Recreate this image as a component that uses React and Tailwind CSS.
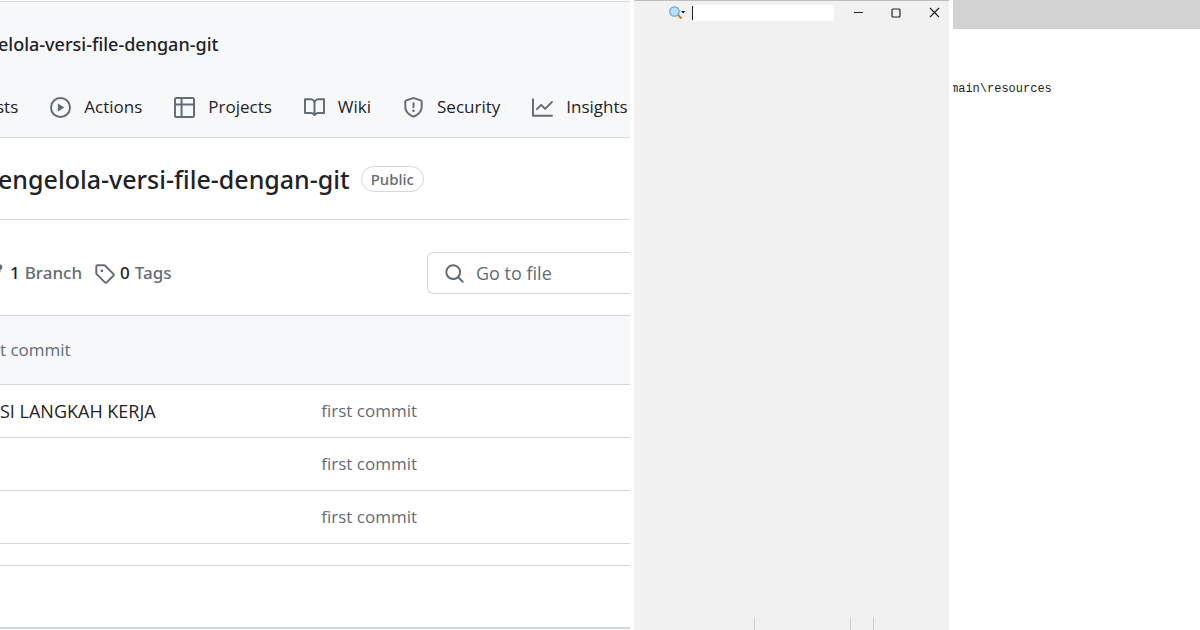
import React from 'react';

const icons = {
  play: 'M8 0a8 8 0 1 1 0 16A8 8 0 0 1 8 0ZM1.5 8a6.5 6.5 0 1 0 13 0 6.5 6.5 0 0 0-13 0Zm4.879-2.773 4.264 2.559a.25.25 0 0 1 0 .428l-4.264 2.559A.25.25 0 0 1 6 10.559V5.442a.25.25 0 0 1 .379-.215Z',
  table: 'M0 1.75C0 .784.784 0 1.75 0h12.5C15.216 0 16 .784 16 1.75v12.5A1.75 1.75 0 0 1 14.25 16H1.75A1.75 1.75 0 0 1 0 14.25ZM6.5 6.5v8h7.75a.25.25 0 0 0 .25-.25V6.5Zm8-1.5V1.75a.25.25 0 0 0-.25-.25H6.5V5Zm-13 1.5v7.75c0 .138.112.25.25.25H5v-8ZM5 5V1.5H1.75a.25.25 0 0 0-.25.25V5Z',
  book: 'M0 1.75A.75.75 0 0 1 .75 1h4.253c1.227 0 2.317.59 3 1.501A3.743 3.743 0 0 1 11.006 1h4.245a.75.75 0 0 1 .75.75v10.5a.75.75 0 0 1-.75.75h-4.507a2.25 2.25 0 0 0-1.591.659l-.622.621a.75.75 0 0 1-1.06 0l-.622-.621A2.25 2.25 0 0 0 5.258 13H.75a.75.75 0 0 1-.75-.75Zm7.251 10.324.004-5.073-.002-2.253A2.25 2.25 0 0 0 5.003 2.5H1.5v9h3.757a3.75 3.75 0 0 1 1.994.574ZM8.755 4.75l-.004 7.322a3.752 3.752 0 0 1 1.992-.572H14.5v-9h-3.495a2.25 2.25 0 0 0-2.25 2.25Z',
  shield: 'M7.467.133a1.748 1.748 0 0 1 1.066 0l5.25 1.68A1.75 1.75 0 0 1 15 3.48V7c0 1.566-.32 3.182-1.303 4.682-.983 1.498-2.585 2.813-5.032 3.855a1.697 1.697 0 0 1-1.33 0c-2.447-1.042-4.049-2.357-5.032-3.855C1.32 10.182 1 8.566 1 7V3.48a1.755 1.755 0 0 1 1.217-1.667Zm.61 1.429a.25.25 0 0 0-.153 0l-5.25 1.68a.25.25 0 0 0-.174.238V7c0 1.358.275 2.666 1.057 3.86.784 1.194 2.121 2.34 4.366 3.297a.196.196 0 0 0 .154 0c2.245-.956 3.582-2.104 4.366-3.298C13.225 9.666 13.5 8.36 13.5 7V3.48a.251.251 0 0 0-.174-.237l-5.25-1.68ZM8.75 4.75v3a.75.75 0 0 1-1.5 0v-3a.75.75 0 0 1 1.5 0ZM9 10.5a1 1 0 1 1-2 0 1 1 0 0 1 2 0Z',
  graph: 'M1.5 1.75V13.5h13.75a.75.75 0 0 1 0 1.5H.75a.75.75 0 0 1-.75-.75V1.75a.75.75 0 0 1 1.5 0Zm14.28 2.53-5.25 5.25a.75.75 0 0 1-1.06 0L7 7.06 4.28 9.78a.751.751 0 0 1-1.042-.018.751.751 0 0 1-.018-1.042l3.25-3.25a.75.75 0 0 1 1.06 0L10 7.94l4.72-4.72a.751.751 0 0 1 1.042.018.751.751 0 0 1 .018 1.042Z',
  tag: 'M1 7.775V2.75C1 1.784 1.784 1 2.75 1h5.025c.464 0 .91.184 1.238.513l6.25 6.25a1.75 1.75 0 0 1 0 2.474l-5.026 5.026a1.75 1.75 0 0 1-2.474 0l-6.25-6.25A1.752 1.752 0 0 1 1 7.775Zm1.5 0c0 .066.026.13.073.177l6.25 6.25a.25.25 0 0 0 .354 0l5.025-5.025a.25.25 0 0 0 0-.354l-6.25-6.25a.25.25 0 0 0-.177-.073H2.75a.25.25 0 0 0-.25.25ZM6 5a1 1 0 1 1 0 2 1 1 0 0 1 0-2Z',
  search: 'M10.68 11.74a6 6 0 0 1-7.922-8.982 6 6 0 0 1 8.982 7.922l3.04 3.04a.749.749 0 0 1-.326 1.275.749.749 0 0 1-.734-.215ZM11.5 7a4.499 4.499 0 1 0-8.997 0A4.499 4.499 0 0 0 11.5 7Z',
  branch: 'M9.5 3.25a2.25 2.25 0 1 1 3 2.122V6A2.5 2.5 0 0 1 10 8.5H6a1 1 0 0 0-1 1v1.128a2.251 2.251 0 1 1-1.5 0V5.372a2.25 2.25 0 1 1 1.5 0v1.836A2.493 2.493 0 0 1 6 7h4a1 1 0 0 0 1-1v-.628A2.25 2.25 0 0 1 9.5 3.25Z',
};

const tabs = [
  { label: 'Actions', icon: 'play' },
  { label: 'Projects', icon: 'table' },
  { label: 'Wiki', icon: 'book' },
  { label: 'Security', icon: 'shield' },
  { label: 'Insights', icon: 'graph' },
];

const files = [
  { name: 'SI LANGKAH KERJA', message: 'first commit' },
  { name: '', message: 'first commit' },
  { name: '', message: 'first commit' },
];

const Icon = ({ name }) => (
  <svg viewBox="0 0 16 16" className="w-[21px] h-[21px] shrink-0 text-[#636c76]" fill="currentColor" aria-hidden="true">
    <path d={icons[name]} />
  </svg>
);

const RepoPage = () => (
  <main className="min-w-0 overflow-hidden whitespace-nowrap bg-white text-[17px] text-[#1f2328]">
    {/* Header */}
    <header className="border-y border-[#d0d7de] bg-[#f6f8fa] mt-px">
      <div className="pt-7 pb-[35px]">
        <a href="#repo" className="block -ml-0.5 text-lg leading-7 font-['Noto_Sans',sans-serif] font-medium">elola-versi-file-dengan-git</a>
      </div>
      <nav className="flex items-center gap-8 -ml-1 pb-4 leading-7">
        <a href="#requests">sts</a>
        {tabs.map((tab) => (
          <a key={tab.label} href={`#${tab.label}`} className="flex items-center gap-[13px]">
            <Icon name={tab.icon} />
            {tab.label}
          </a>
        ))}
      </nav>
    </header>

    {/* Title */}
    <div className="flex items-center gap-[11px] border-b border-[#d8dee4] h-[82px] -ml-0.5 font-['Noto_Sans',sans-serif] font-medium">
      <h1 className="text-[25px] leading-8">engelola-versi-file-dengan-git</h1>
      <span className="rounded-full border border-[#d0d7de] px-[9px] text-[15px] leading-6 text-[#636c76]">Public</span>
    </div>

    {/* Toolbar */}
    <div className="flex items-start justify-between h-[95px] pt-8">
      <div className="flex items-center gap-3 h-[42px] font-['Noto_Sans',sans-serif] font-medium">
        <a href="#branches" className="flex items-center gap-[5px] -ml-4">
          <Icon name="branch" />
          <span>1</span>
          <span className="text-[#636c76]">Branch</span>
        </a>
        <a href="#tags" className="flex items-center gap-[5px]">
          <Icon name="tag" />
          <span>0</span>
          <span className="text-[#636c76]">Tags</span>
        </a>
      </div>
      <label className="flex items-center gap-[11px] w-[203px] h-[42px] rounded-l-md border border-r-0 border-[#d0d7de] pl-4 text-[#636c76]">
        <Icon name="search" />
        <input type="text" placeholder="Go to file" aria-label="Go to file" className="min-w-0 flex-1 bg-transparent text-lg outline-none placeholder:text-[#636c76]" />
      </label>
    </div>

    {/* File list */}
    <table className="w-full border-collapse text-left">
      <thead>
        <tr className="h-[69px] border-y border-[#d0d7de] bg-[#f6f8fa] text-[#636c76]">
          <th colSpan={2} className="font-normal">t commit</th>
        </tr>
      </thead>
      <tbody>
        {files.map((file, i) => (
          <tr key={i} className="h-[53px] border-b border-[#d0d7de]">
            <td className="w-[51%] text-lg">{file.name}</td>
            <td className="text-[#636c76]">{file.message}</td>
          </tr>
        ))}
      </tbody>
    </table>
    <div className="mt-[21px] h-16 border-t border-b-2 border-[#d0d7de]"></div>
  </main>
);

const SearchWindow = () => (
  <section className="flex flex-col justify-between border-t border-[#bdbdbd] bg-[#f1f1f1]">
    <div className="flex items-center justify-between h-6 pl-[35px] pr-2">
      <div className="flex items-center gap-1.5">
        <button aria-label="Search options">
          <svg viewBox="0 0 17 14" className="w-[17px] h-[14px]" aria-hidden="true">
            <path d="M8.5 8.5 12 12" stroke="#c58a35" strokeWidth="2.4" strokeLinecap="round" />
            <circle cx="5.5" cy="5.5" r="4.7" fill="#b5e1fb" stroke="#6aa3cf" strokeWidth="1.2" />
            <path d="M12 5h4.4l-2.2 2.6z" fill="#222" />
          </svg>
        </button>
        <span className="flex items-center">
          <span className="w-px h-[14px] bg-[#222]"></span>
          <input type="text" aria-label="Search" className="w-[141px] h-4 bg-white text-xs outline-none" />
        </span>
      </div>
      <div className="flex gap-6">
        <button aria-label="Minimize">
          <svg viewBox="0 0 14 14" className="w-[14px] h-[14px]" fill="none" stroke="#222"><path d="M3 6.5h9" /></svg>
        </button>
        <button aria-label="Maximize">
          <svg viewBox="0 0 14 14" className="w-[14px] h-[14px]" fill="none" stroke="#222" strokeWidth="1.2"><rect x="3" y="3" width="8" height="8" rx="1" /></svg>
        </button>
        <button aria-label="Close">
          <svg viewBox="0 0 14 14" className="w-[14px] h-[14px]" fill="none" stroke="#222" strokeWidth="1.2"><path d="m3 2 9 9M12 2l-9 9" /></svg>
        </button>
      </div>
    </div>
    {/* Status bar */}
    <div className="flex justify-end h-[13px] pr-[75px]">
      <div className="w-24 border-l border-[#d0d0d0]"></div>
      <div className="w-6 border-x border-[#d0d0d0]"></div>
    </div>
  </section>
);

const Terminal = () => (
  <section className="min-w-0 overflow-hidden bg-white">
    <div className="h-[29px] bg-[#d2d2d2]"></div>
    <p className="-ml-0.5 pt-[52px] font-['Liberation_Mono',monospace] text-xs leading-4 text-[#222]">main\resources</p>
  </section>
);

const App = () => {
  return (
    <div className="grid min-h-screen grid-cols-[630fr_315fr_247fr] gap-x-1 bg-white font-['Open_Sans',sans-serif]">
      <RepoPage />
      <SearchWindow />
      <Terminal />
    </div>
  );
};

export default App;
